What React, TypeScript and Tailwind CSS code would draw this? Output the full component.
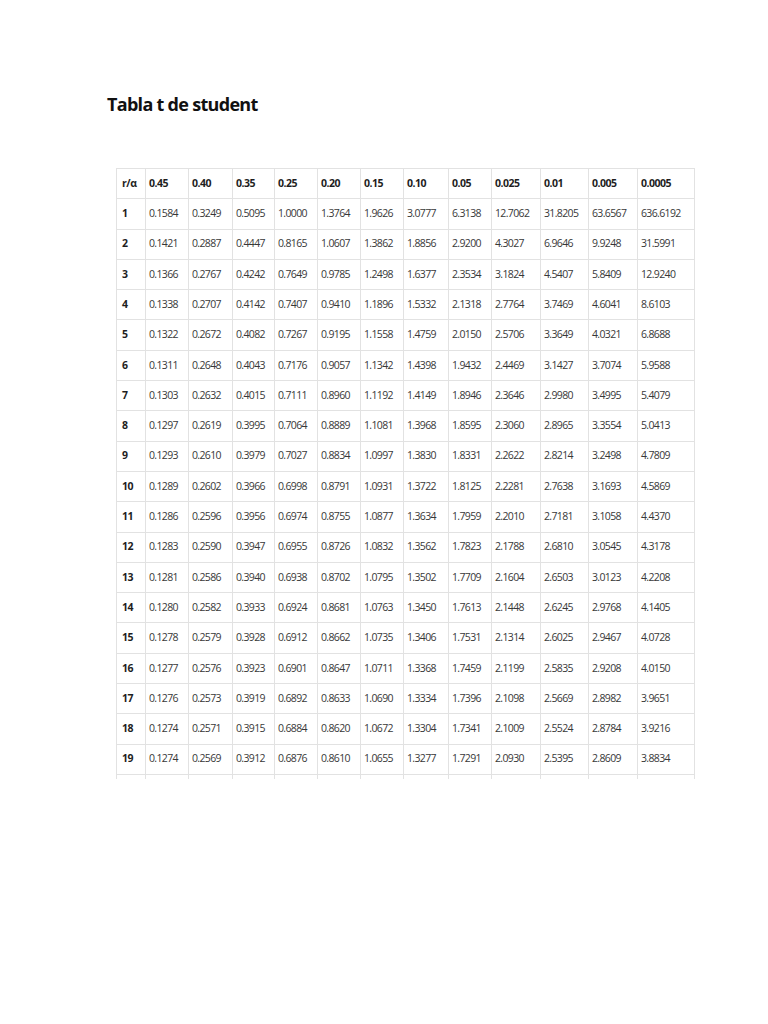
import React from "react";

const headers = ["0.45", "0.40", "0.35", "0.25", "0.20", "0.15", "0.10", "0.05", "0.025", "0.01", "0.005", "0.0005"];

const rows: string[][] = [
  ["0.1584", "0.3249", "0.5095", "1.0000", "1.3764", "1.9626", "3.0777", "6.3138", "12.7062", "31.8205", "63.6567", "636.6192"],
  ["0.1421", "0.2887", "0.4447", "0.8165", "1.0607", "1.3862", "1.8856", "2.9200", "4.3027", "6.9646", "9.9248", "31.5991"],
  ["0.1366", "0.2767", "0.4242", "0.7649", "0.9785", "1.2498", "1.6377", "2.3534", "3.1824", "4.5407", "5.8409", "12.9240"],
  ["0.1338", "0.2707", "0.4142", "0.7407", "0.9410", "1.1896", "1.5332", "2.1318", "2.7764", "3.7469", "4.6041", "8.6103"],
  ["0.1322", "0.2672", "0.4082", "0.7267", "0.9195", "1.1558", "1.4759", "2.0150", "2.5706", "3.3649", "4.0321", "6.8688"],
  ["0.1311", "0.2648", "0.4043", "0.7176", "0.9057", "1.1342", "1.4398", "1.9432", "2.4469", "3.1427", "3.7074", "5.9588"],
  ["0.1303", "0.2632", "0.4015", "0.7111", "0.8960", "1.1192", "1.4149", "1.8946", "2.3646", "2.9980", "3.4995", "5.4079"],
  ["0.1297", "0.2619", "0.3995", "0.7064", "0.8889", "1.1081", "1.3968", "1.8595", "2.3060", "2.8965", "3.3554", "5.0413"],
  ["0.1293", "0.2610", "0.3979", "0.7027", "0.8834", "1.0997", "1.3830", "1.8331", "2.2622", "2.8214", "3.2498", "4.7809"],
  ["0.1289", "0.2602", "0.3966", "0.6998", "0.8791", "1.0931", "1.3722", "1.8125", "2.2281", "2.7638", "3.1693", "4.5869"],
  ["0.1286", "0.2596", "0.3956", "0.6974", "0.8755", "1.0877", "1.3634", "1.7959", "2.2010", "2.7181", "3.1058", "4.4370"],
  ["0.1283", "0.2590", "0.3947", "0.6955", "0.8726", "1.0832", "1.3562", "1.7823", "2.1788", "2.6810", "3.0545", "4.3178"],
  ["0.1281", "0.2586", "0.3940", "0.6938", "0.8702", "1.0795", "1.3502", "1.7709", "2.1604", "2.6503", "3.0123", "4.2208"],
  ["0.1280", "0.2582", "0.3933", "0.6924", "0.8681", "1.0763", "1.3450", "1.7613", "2.1448", "2.6245", "2.9768", "4.1405"],
  ["0.1278", "0.2579", "0.3928", "0.6912", "0.8662", "1.0735", "1.3406", "1.7531", "2.1314", "2.6025", "2.9467", "4.0728"],
  ["0.1277", "0.2576", "0.3923", "0.6901", "0.8647", "1.0711", "1.3368", "1.7459", "2.1199", "2.5835", "2.9208", "4.0150"],
  ["0.1276", "0.2573", "0.3919", "0.6892", "0.8633", "1.0690", "1.3334", "1.7396", "2.1098", "2.5669", "2.8982", "3.9651"],
  ["0.1274", "0.2571", "0.3915", "0.6884", "0.8620", "1.0672", "1.3304", "1.7341", "2.1009", "2.5524", "2.8784", "3.9216"],
  ["0.1274", "0.2569", "0.3912", "0.6876", "0.8610", "1.0655", "1.3277", "1.7291", "2.0930", "2.5395", "2.8609", "3.8834"],
];

// column widths measured off the reference
const grid = "grid grid-cols-[29px_43px_44px_42px_43px_43px_43px_45px_43px_49px_48px_49px_57px]";

function Row({ label, cells, bold }: { label: string; cells: string[]; bold?: boolean }) {
  return (
    <div className={`${grid} h-[30.3px] border-b border-[#e2e2e2]`}>
      <div className="flex items-center pl-[5px] border-r border-[#e2e2e2] font-bold text-[#1e1e1e] tracking-[-0.4px]">{label}</div>
      {cells.map((c, i) => (
        <div
          key={i}
          className={`flex items-center pl-[3px] whitespace-nowrap ${i < cells.length - 1 ? "border-r border-[#e2e2e2]" : ""} ${
            bold ? "font-bold text-[#1e1e1e] tracking-[-0.5px]" : "text-[#383838] tracking-[-0.65px]"
          }`}
        >
          {c}
        </div>
      ))}
    </div>
  );
}

export default function App() {
  return (
    <div className="w-[768px] h-[1024px] bg-white font-['Open_Sans',sans-serif]">
      <div className="pt-[91px] pl-[107px]">
        <h1 className="text-[18px] font-bold text-[#111] tracking-[-0.7px] leading-[26px]">Tabla t de student</h1>
      </div>
      <div className="mt-[51px] ml-[116px] w-[579px] h-[611px] overflow-hidden">
        <div className="border border-[#e2e2e2] text-[10.5px]">
          <Row label="r/α" cells={headers} bold />
          {rows.map((r, i) => (
            <Row key={i} label={String(i + 1)} cells={r} />
          ))}
          <Row label="" cells={headers.map(() => "")} />
        </div>
      </div>
    </div>
  );
}
